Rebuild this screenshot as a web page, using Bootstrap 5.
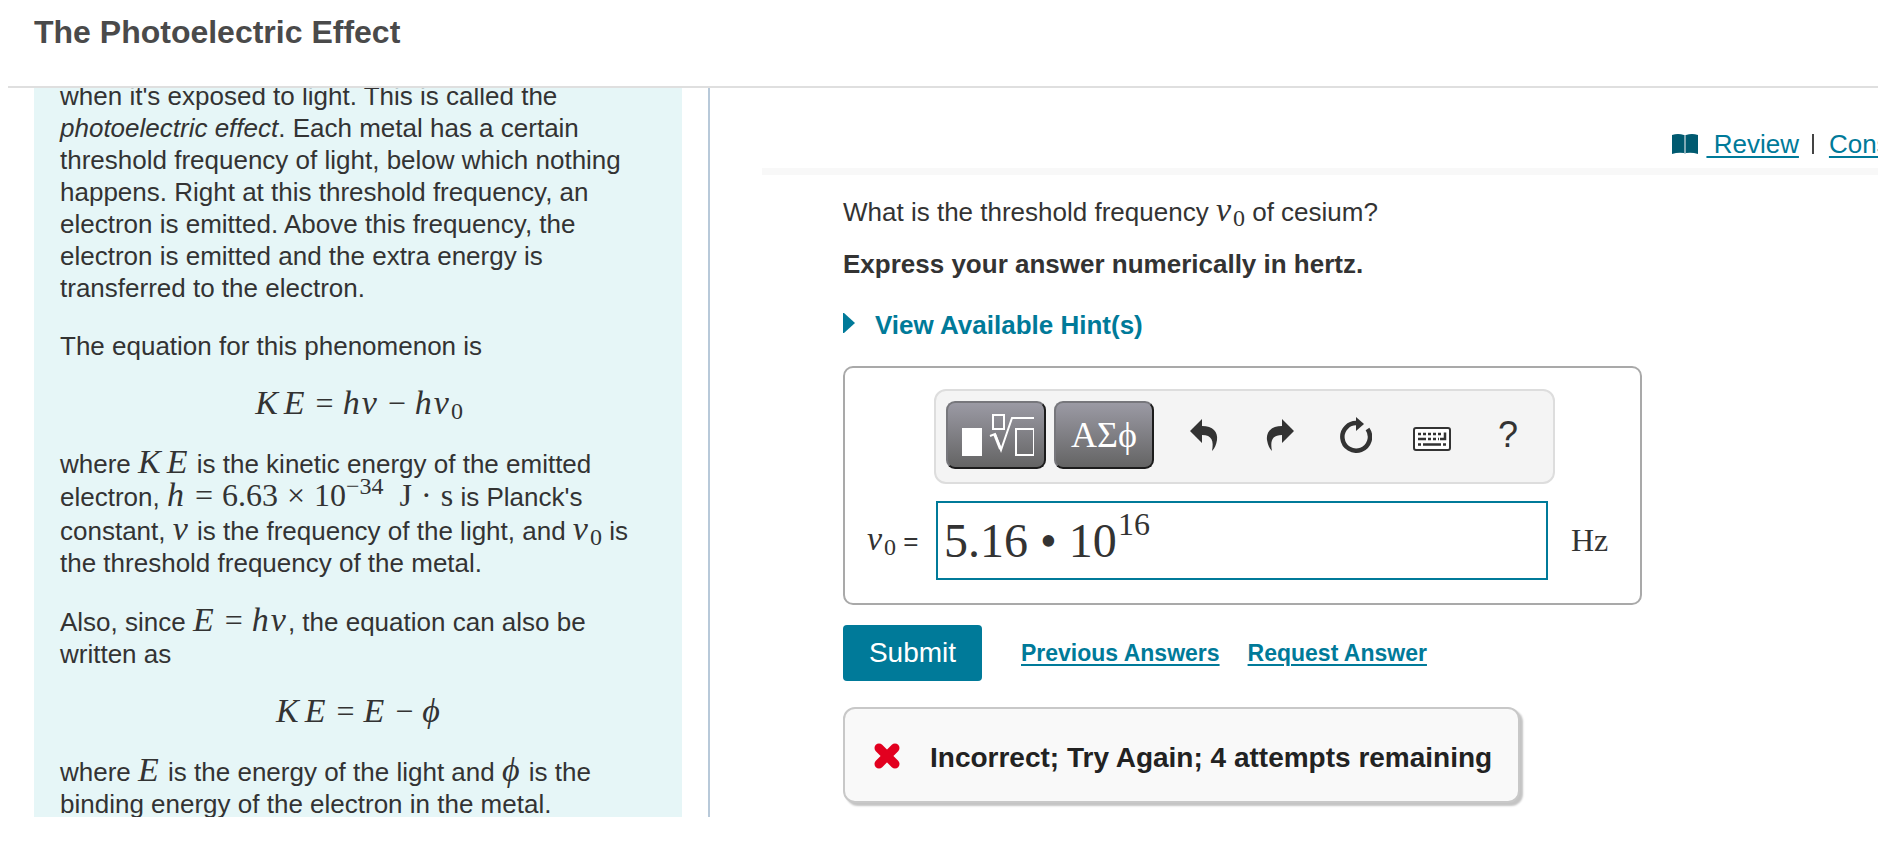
<!DOCTYPE html>
<html lang="en">
<head>
<meta charset="utf-8">
<meta name="viewport" content="width=device-width, initial-scale=1">
<title>The Photoelectric Effect</title>
<link rel="stylesheet" href="https://cdn.jsdelivr.net/npm/bootstrap@5.3.0/dist/css/bootstrap.min.css">
<style>
  :root { --teal: #007a99; --ink: #333; }
  body { font: 26px/32px "Liberation Sans", Arial, sans-serif; color: var(--ink); padding-bottom: 31px; }
  p { margin-bottom: 26px; }
  a { color: var(--teal); text-decoration-thickness: 2px; text-underline-offset: 3px; }

  .page-head { height: 88px; margin-left: 8px; padding: 12px 26px; border-bottom: 2px solid #dfdfdf; }
  .page-head h1 { font-size: 32px; line-height: 40px; color: #4a4a4a; }

  .intro-pane { width: 710px; padding: 0 26px 0 34px; border-right: 2px solid #b8c9d9; }
  .intro-scroll { height: 100%; padding: 0 24px 0 26px; background: #e6f6f7; }
  .intro-text { margin-top: -8px; }

  /* Formulas */
  .fx { font-family: "Liberation Serif", "Times New Roman", serif; font-size: 32px; line-height: 29px; white-space: nowrap; }
  .fx i { font-size: 34px; margin-right: 2px; }
  .fx .wide { margin-right: 6px; }
  .fx .rel { margin: 0 9px; }
  .fx sub, .fx sup { font-size: 24px; line-height: 24px; }
  .fx sub { bottom: -5px; }
  .fx sup { top: -12px; line-height: 32px; }

  .work-pane { padding-left: 52px; }
  .tools-row { height: 87px; padding: 32px 0 0; border-bottom: 7px solid #f8f8f8; }
  .tools-links { margin-right: -68px; white-space: pre; }
  .bar { width: 2px; height: 20px; background: #444; margin: 0 15px 0 13px; }
  .question { padding: 20px 0 0 81px; }
  .question > p { margin-bottom: 20px; }
  .hint-btn { color: var(--teal); font-weight: 700; gap: 20px; margin: 29px 0 25px; }

  .answer-box { width: 799px; max-width: 100%; padding: 21px 26px 23px 22px; border: 2px solid #a9a9a9; border-radius: 10px; }
  .math-bar { width: 621px; height: 95px; margin: 0 0 17px 67px; padding: 10px; border: 2px solid #ddd; border-radius: 12px; background: #f4f4f4; }
  .pal-btn { flex: none; width: 100px; height: 68px; margin-right: 8px; border: 2px solid; border-color: #77777c #1c1c1c #1c1c1c #77777c; border-radius: 9px; background: linear-gradient(#9b9aa4, #646464); color: #fff; font: 36px/60px "Liberation Serif", serif; }
  .tool-btn { width: 76px; height: 68px; color: var(--ink); font-size: 36px; }
  .answer-label { width: 69px; }
  .entry { width: 612px; height: 79px; padding-left: 6px; border: 2px solid var(--teal); }
  .entry input { border: 0; outline: 0; padding: 0; background: transparent; color: var(--ink); font-family: "Liberation Serif", serif; }
  .base-in { width: 174px; height: 60px; font-size: 48px; }
  .exp-in { width: 40px; height: 34px; font-size: 32px; margin-bottom: 32px; }
  .unit { margin-left: 23px; }

  .submit-btn { width: 139px; height: 56px; margin-right: 39px; border-radius: 4px; background: var(--teal); color: #fff; font-size: 28px; }
  .more-link { font-size: 23px; font-weight: 700; margin-right: 28px; }
  .feedback { width: 677px; max-width: 100%; height: 96px; margin-top: 26px; padding: 6px 20px 0 28px; gap: 29px; border: 2px solid #c8c8c8; border-radius: 12px; background: #f9f9f9; box-shadow: 3px 3px 2px #c4c4c4; color: #222; font-size: 28px; font-weight: 700; }
</style>
</head>
<body class="d-flex flex-column vh-100 overflow-hidden">
<header class="page-head flex-shrink-0"><h1 class="fw-bold m-0">The Photoelectric Effect</h1></header>

<main class="d-flex flex-grow-1 overflow-hidden">
  <aside class="intro-pane flex-shrink-0">
    <div class="intro-scroll overflow-hidden">
      <div class="intro-text">
        <p>when it's exposed to light. This is called the <em>photoelectric effect</em>. Each metal has a certain threshold frequency of light, below which nothing happens. Right at this threshold frequency, an electron is emitted. Above this frequency, the electron is emitted and the extra energy is transferred to the electron.</p>
        <p>The equation for this phenomenon is</p>
        <p class="text-center"><span class="fx"><i class="wide">K</i><i>E</i><span class="rel">=</span><i>h</i><i>ν</i><span class="rel">−</span><i>h</i><i>ν</i><sub>0</sub></span></p>
        <p>where <span class="fx"><i class="wide">K</i><i>E</i></span> is the kinetic energy of the emitted electron, <span class="fx"><i>h</i><span class="rel">=</span>6.63<span class="rel">×</span>10<sup>−34</sup>&nbsp; J<span class="rel">·</span>s</span> is Planck's constant, <span class="fx"><i>ν</i></span> is the frequency of the light, and <span class="fx"><i>ν</i><sub>0</sub></span> is the threshold frequency of the metal.</p>
        <p>Also, since <span class="fx"><i>E</i><span class="rel">=</span><i>h</i><i>ν</i></span>, the equation can also be written as</p>
        <p class="text-center"><span class="fx"><i class="wide">K</i><i>E</i><span class="rel">=</span><i>E</i><span class="rel">−</span><i>ϕ</i></span></p>
        <p>where <span class="fx"><i>E</i></span> is the energy of the light and <span class="fx"><i>ϕ</i></span> is the binding energy of the electron in the metal.</p>
      </div>
    </div>
  </aside>

  <section class="work-pane flex-grow-1 overflow-hidden">
    <nav class="tools-row d-flex justify-content-end overflow-hidden" aria-label="Resources">
      <div class="tools-links d-flex align-items-center"><svg class="me-2" width="26" height="20" viewBox="0 0 26 20" aria-hidden="true"><path fill="#005a70" d="M0 1Q6-1 12 1V19Q6 18 0 20ZM14 1Q20-1 26 1V20Q20 18 14 19Z"/><path fill="#7fa9b5" d="M12 1h2v18l-1 1-1-1z"/></svg><a href="#">&nbsp;Review</a><span class="bar"></span><a href="#">Constants</a></div>
    </nav>

    <div class="question">
      <p>What is the threshold frequency <span class="fx"><i>ν</i><sub>0</sub></span> of cesium?</p>
      <p class="fw-bold">Express your answer numerically in hertz.</p>
      <button type="button" class="hint-btn d-flex align-items-center border-0 bg-transparent p-0"><svg class="mb-1" width="12" height="20" viewBox="0 0 12 20" aria-hidden="true"><path fill="currentColor" d="M0 0h1l11 10L1 20H0z"/></svg>View Available Hint(s)</button>

      <form>
        <div class="answer-box">
          <div class="math-bar d-flex" role="toolbar" aria-label="Equation tools">
            <button type="button" class="pal-btn p-0" aria-label="Templates"><svg class="d-block mx-auto" width="76" height="46" viewBox="0 0 76 46" fill="none" stroke="#fff" stroke-width="2"><path fill="#fff" stroke="none" d="M4 16h20v28H4z"/><path d="M35 3h11v14H35zM58 17h18v26H58z"/><path d="M32 24l5-2 6 16L54 6h22"/><path stroke-width="3" d="M36.500 22l6 15"/></svg></button>
            <button type="button" class="pal-btn p-0" aria-label="Symbols">ΑΣϕ</button>
            <div class="d-flex ps-1">
              <button type="button" class="tool-btn border-0 bg-transparent p-0" aria-label="Undo"><svg class="d-block mx-auto" width="28" height="32" viewBox="0 0 28 32" fill="currentColor"><path d="M0 12L12 0V7C23 7 28 13 27 21 26 26 25 29 22 32 24 22 22 16 12 16V24Z"/></svg></button>
              <button type="button" class="tool-btn border-0 bg-transparent p-0" aria-label="Redo"><svg class="d-block mx-auto" width="28" height="32" viewBox="0 0 28 32" fill="currentColor"><path d="M28 12L16 0V7C5 7 0 13 1 21 2 26 3 29 6 32 4 22 6 16 16 16V24Z"/></svg></button>
              <button type="button" class="tool-btn border-0 bg-transparent p-0" aria-label="Reset"><svg class="d-block mx-auto" width="32" height="36" viewBox="0 0 32 36"><path fill="none" stroke="currentColor" stroke-width="4.500" d="M18 6.200A13.800 13.800 0 1 0 27.500 12"/><path fill="currentColor" d="M16 0l8 7-8 7z"/></svg></button>
              <button type="button" class="tool-btn border-0 bg-transparent p-0" aria-label="Keyboard shortcuts"><svg class="d-block mx-auto mt-2" width="38" height="24" viewBox="0 0 38 24"><rect x="1" y="1" width="36" height="22" rx="2" fill="#fff" stroke="currentColor" stroke-width="2"/><g fill="none" stroke="currentColor" stroke-width="2.500"><path stroke-dasharray="3 2" d="M5 7h23"/><path stroke-dasharray="3 2" d="M10 12h16"/><path d="M5 12h5M5 17.500h3M10 17.500h18M30 17.500h3M27 12h5V5.500"/></g></svg></button>
              <button type="button" class="tool-btn border-0 bg-transparent p-0" aria-label="Help">?</button>
            </div>
          </div>
          <div class="d-flex align-items-center">
            <label for="answer" class="answer-label"><span class="fx"><i>ν</i><sub>0</sub></span> =</label>
            <div class="entry d-flex align-items-center">
              <input id="answer" class="base-in" type="text" value="5.16 • 10">
              <input class="exp-in" type="text" value="16" aria-label="Exponent">
            </div>
            <span class="fx unit">Hz</span>
          </div>
        </div>

        <div class="d-flex align-items-center mt-3 pt-1">
          <button type="submit" class="submit-btn border-0 p-0">Submit</button>
          <a class="more-link" href="#">Previous Answers</a>
          <a class="more-link" href="#">Request Answer</a>
        </div>
      </form>

      <div class="feedback d-flex align-items-center" role="status"><svg class="flex-shrink-0 mb-1" width="28" height="28" viewBox="0 0 28 28" aria-hidden="true"><path stroke="#e2001f" stroke-width="9" stroke-linecap="round" d="M6 6l16 16M22 6L6 22"/></svg>Incorrect; Try Again; 4 attempts remaining</div>
    </div>
  </section>
</main>
<script src="https://cdn.jsdelivr.net/npm/bootstrap@5.3.0/dist/js/bootstrap.bundle.min.js"></script>
</body>
</html>
